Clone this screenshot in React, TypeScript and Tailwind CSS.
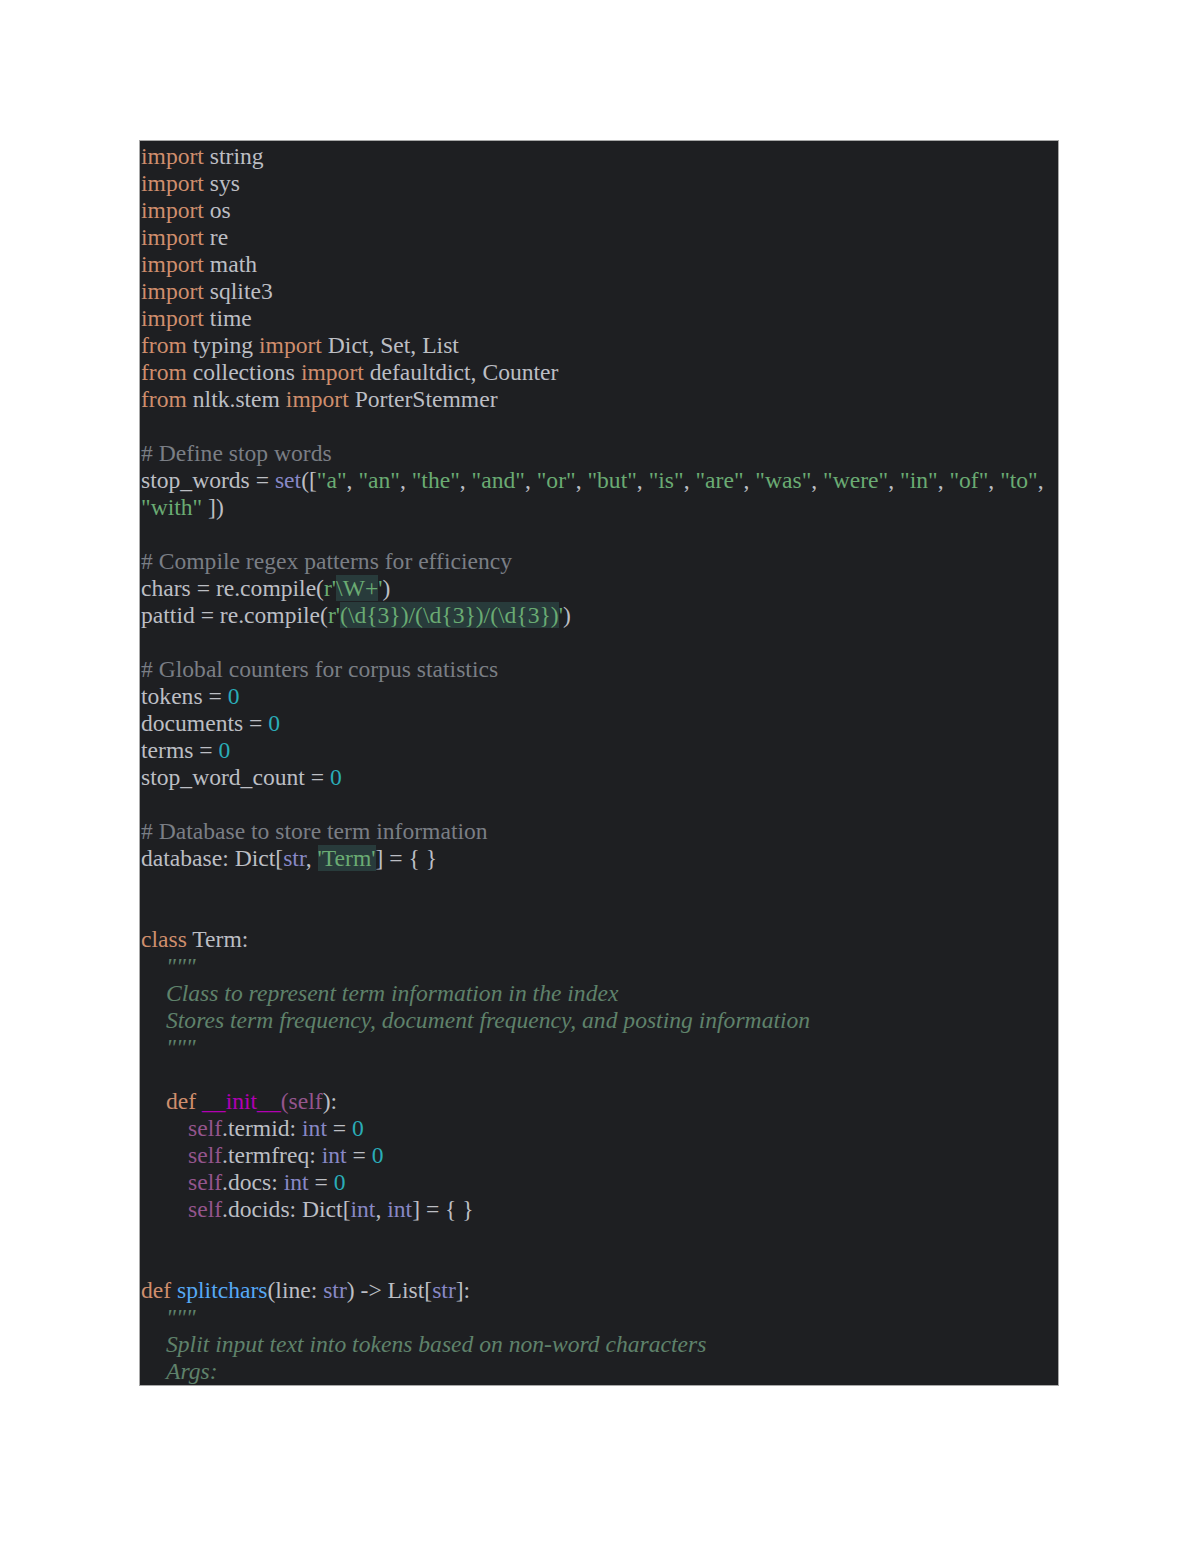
const C = {
  t: "text-[#bcbec4]",
  k: "text-[#cf8e6d]",
  s: "text-[#6aab73]",
  rx: "text-[#6aab73] bg-[#283b3b]",
  n: "text-[#2aacb8]",
  c: "text-[#7a7e85]",
  b: "text-[#8888c6]",
  self: "text-[#94558d]",
  m: "text-[#b200b2]",
  f: "text-[#56a8f5]",
  d: "text-[#5f826b] italic",
};

type Tok = [keyof typeof C, string];
type Line = { indent?: 0 | 1 | 2; toks: Tok[] };

const L = (toks: Tok[], indent: 0 | 1 | 2 = 0): Line => ({ indent, toks });
const blank = L([]);

const lines: Line[] = [
  L([["k", "import"], ["t", " string"]]),
  L([["k", "import"], ["t", " sys"]]),
  L([["k", "import"], ["t", " os"]]),
  L([["k", "import"], ["t", " re"]]),
  L([["k", "import"], ["t", " math"]]),
  L([["k", "import"], ["t", " sqlite3"]]),
  L([["k", "import"], ["t", " time"]]),
  L([["k", "from"], ["t", " typing "], ["k", "import"], ["t", " Dict, Set, List"]]),
  L([["k", "from"], ["t", " collections "], ["k", "import"], ["t", " defaultdict, Counter"]]),
  L([["k", "from"], ["t", " nltk.stem "], ["k", "import"], ["t", " PorterStemmer"]]),
  blank,
  L([["c", "# Define stop words"]]),
  L([
    ["t", "stop_words = "],
    ["b", "set"],
    ["t", "(["],
    ["s", "\"a\""], ["t", ", "],
    ["s", "\"an\""], ["t", ", "],
    ["s", "\"the\""], ["t", ", "],
    ["s", "\"and\""], ["t", ", "],
    ["s", "\"or\""], ["t", ", "],
    ["s", "\"but\""], ["t", ", "],
    ["s", "\"is\""], ["t", ", "],
    ["s", "\"are\""], ["t", ", "],
    ["s", "\"was\""], ["t", ", "],
    ["s", "\"were\""], ["t", ", "],
    ["s", "\"in\""], ["t", ", "],
    ["s", "\"of\""], ["t", ", "],
    ["s", "\"to\""], ["t", ","],
  ]),
  L([["s", "\"with\""], ["t", " ])"]]),
  blank,
  L([["c", "# Compile regex patterns for efficiency"]]),
  L([["t", "chars = re.compile("], ["s", "r'"], ["rx", "\\W+"], ["s", "'"], ["t", ")"]]),
  L([["t", "pattid = re.compile("], ["s", "r'"], ["rx", "(\\d{3})/(\\d{3})/(\\d{3})"], ["s", "'"], ["t", ")"]]),
  blank,
  L([["c", "# Global counters for corpus statistics"]]),
  L([["t", "tokens = "], ["n", "0"]]),
  L([["t", "documents = "], ["n", "0"]]),
  L([["t", "terms = "], ["n", "0"]]),
  L([["t", "stop_word_count = "], ["n", "0"]]),
  blank,
  L([["c", "# Database to store term information"]]),
  L([["t", "database: Dict["], ["b", "str"], ["t", ", "], ["rx", "'Term'"], ["t", "] = { }"]]),
  blank,
  blank,
  L([["k", "class"], ["t", " Term:"]]),
  L([["d", "\"\"\""]], 1),
  L([["d", "Class to represent term information in the index"]], 1),
  L([["d", "Stores term frequency, document frequency, and posting information"]], 1),
  L([["d", "\"\"\""]], 1),
  blank,
  L([["k", "def"], ["t", " "], ["m", "__init__"], ["self", "(self"], ["t", "):"]], 1),
  L([["self", "self"], ["t", ".termid: "], ["b", "int"], ["t", " = "], ["n", "0"]], 2),
  L([["self", "self"], ["t", ".termfreq: "], ["b", "int"], ["t", " = "], ["n", "0"]], 2),
  L([["self", "self"], ["t", ".docs: "], ["b", "int"], ["t", " = "], ["n", "0"]], 2),
  L([["self", "self"], ["t", ".docids: Dict["], ["b", "int"], ["t", ", "], ["b", "int"], ["t", "] = { }"]], 2),
  blank,
  blank,
  L([["k", "def"], ["t", " "], ["f", "splitchars"], ["t", "(line: "], ["b", "str"], ["t", ") -> List["], ["b", "str"], ["t", "]:"]]),
  L([["d", "\"\"\""]], 1),
  L([["d", "Split input text into tokens based on non-word characters"]], 1),
  L([["d", "Args:"]], 1),
];

const indentCls = ["pl-[1px]", "pl-[26px]", "pl-[48px]"];

export default function App() {
  return (
    <div className="min-h-[1553px] bg-white pt-[140px]">
      <div
        className="ml-[139px] w-[920px] border border-[#a8a8a8] bg-[#1e1f22] pt-[2px] text-[23.6px] leading-[27px] whitespace-pre"
        style={{ fontFamily: '"Liberation Serif", "Times New Roman", serif' }}
      >
        {lines.map((line, i) => (
          <div key={i} className={`h-[27px] ${indentCls[line.indent ?? 0]}`}>
            {line.toks.map(([cls, text], j) => (
              <span key={j} className={C[cls]}>
                {text}
              </span>
            ))}
          </div>
        ))}
      </div>
    </div>
  );
}
